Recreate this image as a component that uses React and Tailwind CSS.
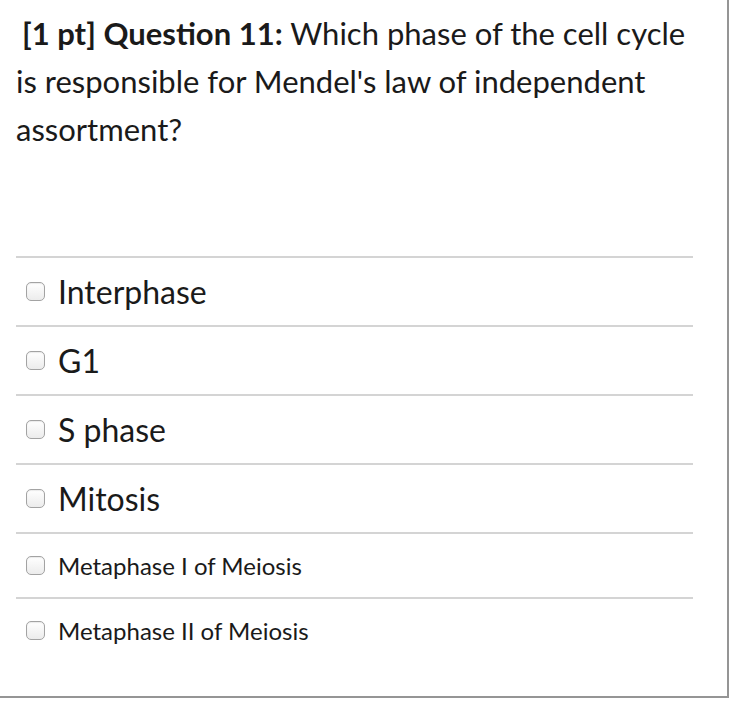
import React from 'react';

const options = [
    { label: 'Interphase', big: true },
    { label: 'G1', big: true },
    { label: 'S phase', big: true },
    { label: 'Mitosis', big: true },
    { label: 'Metaphase I of Meiosis', big: false },
    { label: 'Metaphase II of Meiosis', big: false },
];

function Box() {
    return (
        <span className="w-[19px] h-[19px] shrink-0 rounded-[5px] border border-[#a3a3a3] bg-gradient-to-b from-white to-[#ececec] shadow-[inset_0_1px_1px_rgba(0,0,0,0.08)]"></span>
    );
}

export default function App() {
    return (
        <div className="w-[748px] h-[728px] bg-white" style={{ fontFamily: 'Lato, "Open Sans", sans-serif' }}>
            <div className="w-[729px] h-[698px] border-r-2 border-b-2 border-[#959595] pl-[16px] pr-[34px] pt-[9px] text-[#1a1a1a]">
                {/* Question */}
                <p className="w-[690px] text-[31px] leading-[48px] indent-[6px]">
                    <span className="font-bold">[1 pt] Question 11:</span> Which phase of the cell cycle is responsible for Mendel's law of independent assortment?
                </p>

                {/* Answers */}
                <div className="mt-[103px]">
                    {options.map((opt, i) => (
                        <div
                            key={i}
                            className={`flex items-center gap-[13px] pl-[10px] border-t-2 border-[#d4d4d4] ${opt.big ? 'h-[69px]' : 'h-[65px]'}`}
                        >
                            <Box />
                            <span className={opt.big ? 'text-[32px]' : 'text-[24px]'}>{opt.label}</span>
                        </div>
                    ))}
                </div>
            </div>
        </div>
    );
}
